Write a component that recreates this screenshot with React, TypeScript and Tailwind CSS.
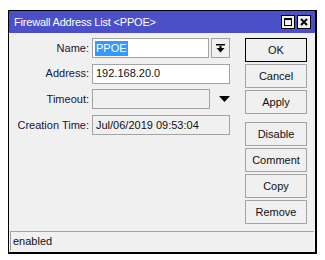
import React from "react";

const font = { fontFamily: '"Liberation Sans", Arial, sans-serif' };

function Btn({ label, def }: { label: string; def?: boolean }) {
  return (
    <div
      className={`w-[62px] h-[24px] flex items-center justify-center bg-[#f0f0f0] text-[11px] text-[#111] border ${
        def ? "border-black" : "border-[#a3a3a3]"
      }`}
    >
      {label}
    </div>
  );
}

function Label({ text }: { text: string }) {
  return (
    <div className="w-[83px] pr-[3px] text-right text-[11px] text-[#15153a] leading-none">{text}</div>
  );
}

export default function App() {
  return (
    <div className="w-[325px] h-[260px] bg-white pt-[10px] pl-[8px]" style={font}>
      <div className="w-[309px] h-[244px] border border-black border-r-2 border-b-2 flex flex-col bg-[#f0f0f0]">
        <div className="h-[22px] bg-[#4b50c8] flex items-center justify-between pl-[5px] pr-[4px]">
          <span className="text-[11px] text-white tracking-[-0.2px]">Firewall Address List &lt;PPOE&gt;</span>
          <div className="flex gap-[2px]">
            <div className="w-[14px] h-[14px] bg-[#f0f0f0] border border-black flex items-center justify-center">
              <div className="w-[8px] h-[8px] border border-black border-t-2" />
            </div>
            <div className="w-[14px] h-[14px] bg-[#f0f0f0] border border-black flex items-center justify-center">
              <svg width="8" height="8" viewBox="0 0 8 8">
                <path d="M1 1 L7 7 M7 1 L1 7" stroke="black" strokeWidth="2" />
              </svg>
            </div>
          </div>
        </div>
        <div className="flex flex-1 pt-[5px]">
          <div className="flex flex-col gap-[6px] w-[236px]">
            <div className="flex items-center h-[20px]">
              <Label text="Name:" />
              <div className="w-[117px] h-[20px] bg-white border border-[#a3a3a3] flex items-center pl-[2px]">
                <span className="bg-[#3399ff] text-white text-[11px] h-[15px] leading-[15px] px-[1px]">PPOE</span>
              </div>
              <div className="ml-[2px] w-[19px] h-[20px] border border-[#a3a3a3] flex items-center justify-center">
                <svg width="9" height="9" viewBox="0 0 9 9">
                  <rect x="0" y="0" width="9" height="1.5" fill="black" />
                  <path d="M3.5 2 H5.5 V4 H8.5 L4.5 8.5 L0.5 4 H3.5 Z" fill="black" />
                </svg>
              </div>
            </div>
            <div className="flex items-center h-[19px]">
              <Label text="Address:" />
              <div className="w-[138px] h-[20px] bg-white border border-[#a3a3a3] flex items-center pl-[3px] text-[11px] text-[#111]">
                192.168.20.0
              </div>
            </div>
            <div className="flex items-center h-[20px]">
              <Label text="Timeout:" />
              <div className="w-[118px] h-[20px] bg-[#f0f0f0] border border-[#a3a3a3]" />
              <div className="ml-[8px] w-[12px] flex justify-center">
                <svg width="11" height="6" viewBox="0 0 11 6">
                  <path d="M0 0 H11 L5.5 6 Z" fill="black" />
                </svg>
              </div>
            </div>
            <div className="flex items-center h-[20px]">
              <Label text="Creation Time:" />
              <div className="w-[138px] h-[20px] bg-[#f0f0f0] border border-[#a3a3a3] flex items-center pl-[3px] text-[11px] text-[#111]">
                Jul/06/2019 09:53:04
              </div>
            </div>
          </div>
          <div className="flex flex-col ml-[0px]">
            <div className="flex flex-col gap-[2px]">
              <Btn label="OK" def />
              <Btn label="Cancel" />
              <Btn label="Apply" />
            </div>
            <div className="flex flex-col gap-[2px] mt-[8px]">
              <Btn label="Disable" />
              <Btn label="Comment" />
              <Btn label="Copy" />
              <Btn label="Remove" />
            </div>
          </div>
        </div>
        <div className="h-[20px] mx-[1px] mb-[1px] border-t border-l border-[#a3a3a3] border-r border-r-[#f8f8f8] flex items-center pl-[2px] text-[11px] text-[#111]">
          enabled
        </div>
      </div>
    </div>
  );
}
